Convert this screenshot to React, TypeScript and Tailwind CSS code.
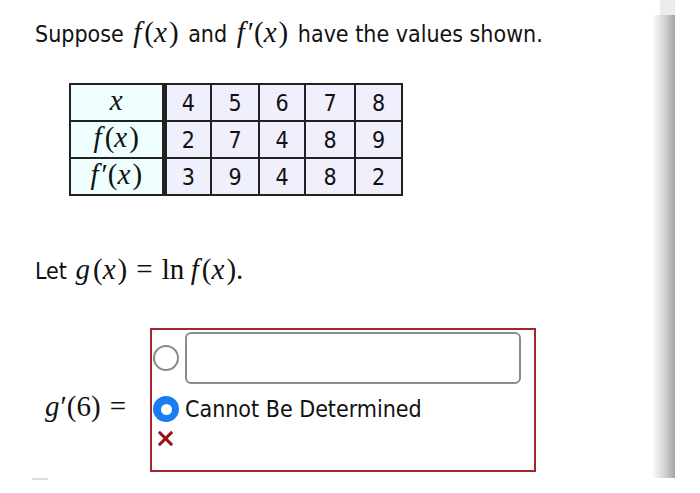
import React from 'react';

const sans = { fontFamily: '"DejaVu Sans Condensed", "DejaVu Sans", Verdana, sans-serif' };

// math bits in a serif italic, like the rendered TeX
const M = ({ children, className = '' }: { children: React.ReactNode; className?: string }) => (
  <span className={`font-['Liberation_Serif',serif] italic text-[29px] ${className}`}>{children}</span>
);
const R = ({ children, className = '' }: { children: React.ReactNode; className?: string }) => (
  <span className={`not-italic ${className}`}>{children}</span>
);
const Fx = ({ prime = false, className = '' }: { prime?: boolean; className?: string }) => (
  <M className={className}>
    f<R className="ml-[3px]">{prime ? '′(' : '('}</R>x<R className="ml-[2px]">)</R>
  </M>
);

const xs = [4, 5, 6, 7, 8];
const fx = [2, 7, 4, 8, 9];
const fpx = [3, 9, 4, 8, 2];
const widths = ['w-[47px]', 'w-[48px]', 'w-[46px]', 'w-[50px]', 'w-[47px]'];

const Row = ({ label, vals }: { label: React.ReactNode; vals: number[] }) => (
  <tr className="h-[37px]">
    <td className="w-[94px] h-[37px] p-0 bg-[#effefe] border-2 border-[#222] border-r-[5px] text-center leading-[30px]">{label}</td>
    {vals.map((v, i) => (
      <td key={i} className={`${widths[i]} h-[37px] p-0 bg-[#f0effc] border-2 border-[#222] text-center text-[23px] leading-[30px]`}>
        {v}
      </td>
    ))}
  </tr>
);

export default function App() {
  return (
    <div className="w-[700px] h-[493px] bg-white flex overflow-hidden text-[#111]" style={sans}>
      <div className="flex-1 pl-[35px] pt-[16px]">
        <p className="text-[23px] leading-[32px]">
          Suppose <Fx className="mx-[3px]" /> and <Fx prime className="mx-[3px]" /> have the values shown.
        </p>

        <table className="border-collapse ml-[34px] mt-[33px]">
          <tbody>
            <Row label={<M>x</M>} vals={xs} />
            <Row label={<Fx />} vals={fx} />
            <Row label={<Fx prime />} vals={fpx} />
          </tbody>
        </table>

        <p className="text-[23px] leading-[32px] mt-[57px]">
          Let <M className="ml-[2px]">g<R className="ml-[3px]">(</R>x<R className="ml-[2px]">)</R><R className="mx-[9px]">=</R><R>ln</R></M>{' '}
          <Fx />
          <M><R>.</R></M>
        </p>

        <div className="flex items-center mt-[41px]">
          <div className="w-[115px] pl-[10px] pt-[14px]">
            <M>g<R className="ml-[1px]">′(6)</R><R className="ml-[9px]">=</R></M>
          </div>
          <div className="w-[386px] h-[144px] border-2 border-[#a3262a] pl-[1px] pt-[2px] flex flex-col">
            <div className="flex items-center gap-[6px]">
              <span className="w-[26px] h-[26px] rounded-full border-2 border-[#8a8a8a] bg-white"></span>
              <div className="w-[336px] h-[52px] rounded-[6px] border-2 border-[#8c8c8c] bg-white"></div>
            </div>
            <div className="flex items-center gap-[6px] mt-[11px]">
              <span className="w-[26px] h-[26px] rounded-full bg-[#1a7cf2] flex items-center justify-center">
                <span className="w-[11px] h-[11px] rounded-full bg-white"></span>
              </span>
              <span className="text-[23px] leading-[28px]">Cannot Be Determined</span>
            </div>
            <div className="mt-[8px] pl-[5px]">
              <svg width="15" height="15" viewBox="0 0 16 16">
                <path d="M2 2 L14 14 M14 2 L2 14" stroke="#9b1114" strokeWidth="3.2" strokeLinecap="square" />
              </svg>
            </div>
          </div>
        </div>
        <div className="w-[16px] h-[2px] bg-[#dcdcdc] mt-[6px] -ml-[3px]"></div>
      </div>

      <div className="w-[22px] mr-[25px] flex flex-col">
        <div className="h-[15px] ml-[7px] bg-[#ececec]"></div>
        <div className="h-[463px] bg-gradient-to-r from-[#fafafa] via-[#d6d6d6] to-[#a4a4a4]"></div>
      </div>
    </div>
  );
}
